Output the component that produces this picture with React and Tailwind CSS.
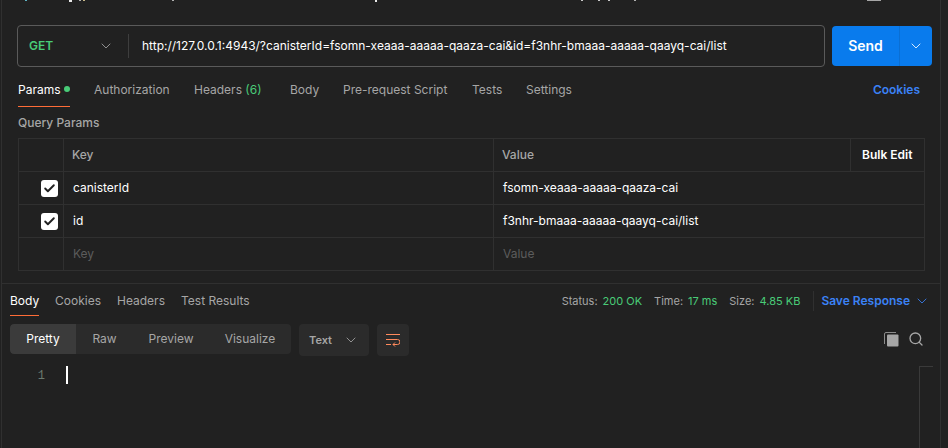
import { ChevronDown, Check, Search } from 'lucide-react';

const PARAM_ROWS = [
  { key: 'canisterId', value: 'fsomn-xeaaa-aaaaa-qaaza-cai' },
  { key: 'id', value: 'f3nhr-bmaaa-aaaaa-qaayq-cai/list' },
];

function ParamRow({ children, checked }) {
  return (
    <div className="grid grid-cols-[45px_430px_1fr] h-[33px] border-b border-[#303030]">
      <div className="flex items-center justify-end pr-[5px] border-r border-[#303030]">
        {checked && (
          <span className="w-[17px] h-[17px] rounded-[3px] bg-white flex items-center justify-center">
            <Check className="w-[13px] h-[13px] text-[#212121]" strokeWidth={3.5} />
          </span>
        )}
      </div>
      {children}
    </div>
  );
}

function WrapIcon() {
  return (
    <svg width="14" height="13" viewBox="0 0 14 13" fill="none" stroke="#ff8a5c" strokeWidth="1">
      <path d="M0 .5h14" />
      <path d="M0 5.500h11.500a2.500 2.500 0 0 1 0 5H7" />
      <path d="M9 8.500l-2 2 2 2" />
      <path d="M0 10.500h5" />
    </svg>
  );
}

export default function App() {
  return (
    <div className="relative w-[948px] h-[448px] bg-[#212121] overflow-hidden font-['Inter',sans-serif] text-[12px] flex">
      {/* bottom edge of the line cut off above the crop */}
      <svg className="absolute left-0 top-0" width="948" height="2">
        <rect x="25" y="0" width="2" height="1" fill="#5fb4c4" />
        <rect x="69" y="0" width="3" height="2" fill="#e8e8e8" />
        <rect x="79" y="0" width="2" height="1" fill="#b0b0b0" />
        <rect x="83" y="0" width="2" height="1" fill="#c8b888" />
        <rect x="172" y="0" width="2" height="1" fill="#b0b0b0" />
        <rect x="375" y="0" width="2" height="2" fill="#e8e8e8" />
        <rect x="581" y="0" width="2" height="1" fill="#c8c8c8" />
        <rect x="598" y="0" width="2" height="1" fill="#c8c8c8" />
        <rect x="608" y="0" width="2" height="1" fill="#c8c8c8" />
        <rect x="634" y="0" width="2" height="1" fill="#b0b0b0" />
        <rect x="867" y="0" width="14" height="1" fill="#a6a6a6" />
      </svg>

      <div className="w-[940px] h-full ml-[1px] border-l border-r border-[#303030] flex flex-col">
        {/* Request */}
        <div className="h-[284px] border-b border-[#303030] shrink-0 pt-[25px] pl-[15px] pr-[7px]">
          <div className="flex gap-[7px]">
            <div className="w-[808px] h-[42px] border border-[#5a5a5a] rounded-[4px] flex items-center">
              <span className="w-[80px] pl-[11px] text-[#49cc78] font-semibold">GET</span>
              <ChevronDown className="w-[16px] h-[16px] text-[#a6a6a6]" strokeWidth={1.25} />
              <div className="w-px h-[24px] bg-[#3e3e3e] ml-[14px]" />
              <span className="ml-[13px] text-white whitespace-nowrap">
                http://127.0.0.1:4943/?canisterId=fsomn-xeaaa-aaaaa-qaaza-cai&amp;id=f3nhr-bmaaa-aaaaa-qaayq-cai/list
              </span>
            </div>
            <div className="w-[100px] h-[40px] mt-px rounded-[4px] bg-[#097bed] flex items-center text-white">
              <span className="w-[68px] text-center text-[14px] font-semibold border-r border-[#0a6fd4] leading-[40px]">Send</span>
              <span className="flex-1 flex justify-center">
                <ChevronDown className="w-[16px] h-[16px]" strokeWidth={1.25} />
              </span>
            </div>
          </div>

          <div className="flex h-[39px] pt-[14px] text-[#a6a6a6] relative">
            <span className="w-[75px] text-white pl-[1px] flex gap-[3px] items-start relative">
              Params
              <span className="w-[6px] h-[6px] rounded-full bg-[#49cc78] mt-[5px]" />
              <span className="absolute left-[1px] top-[25px] w-[52px] h-px bg-[#ff6c37]" />
            </span>
            <span className="w-[102px] pl-[2px]">Authorization</span>
            <span className="w-[96px]">Headers <span className="text-[#49cc78]">(6)</span></span>
            <span className="w-[53px]">Body</span>
            <span className="w-[129px]">Pre-request Script</span>
            <span className="w-[54px]">Tests</span>
            <span>Settings</span>
            <span className="ml-auto mr-[13px] text-[#3b82f6] font-semibold">Cookies</span>
          </div>

          <div className="ml-[1px] mt-[8px] h-[24px] text-[#a6a6a6] font-medium">Query Params</div>

          <div className="ml-[1px] w-[907px] border border-b-0 border-[#303030]">
            <div className="grid grid-cols-[45px_430px_1fr_73px] h-[33px] border-b border-[#303030] items-stretch font-medium text-[#a6a6a6]">
              <div className="border-r border-[#303030]" />
              <div className="border-r border-[#303030] flex items-center pl-[8px]">Key</div>
              <div className="border-r border-[#303030] flex items-center pl-[8px]">Value</div>
              <div className="flex items-center pl-[11px] text-white font-semibold whitespace-nowrap">Bulk Edit</div>
            </div>
            {PARAM_ROWS.map((row) => (
              <ParamRow key={row.key} checked>
                <div className="border-r border-[#303030] flex items-center pl-[9px] text-white">{row.key}</div>
                <div className="flex items-center pl-[9px] text-white">{row.value}</div>
              </ParamRow>
            ))}
            <ParamRow>
              <div className="border-r border-[#303030] flex items-center pl-[9px] pb-[1px] text-[#5c5c5c]">Key</div>
              <div className="flex items-center pl-[9px] pb-[1px] text-[#5c5c5c]">Value</div>
            </ParamRow>
          </div>
        </div>

        {/* Response */}
        <div className="flex-1 pl-[8px] pr-[7px] relative">
          <div className="flex items-center h-[34px] text-[#a6a6a6]">
            <span className="w-[45px] text-white relative">
              Body
              <span className="absolute left-0 top-[23px] w-[29px] h-px bg-[#ff6c37]" />
            </span>
            <span className="w-[62px]">Cookies</span>
            <span className="w-[64px]">Headers</span>
            <span>Test Results</span>
            <div className="ml-auto flex items-center h-[20px] mr-[3px] text-[11px]">
              <span>Status:</span>
              <span className="ml-[5px] text-[#49cc78]">200 OK</span>
              <span className="ml-[12px]">Time:</span>
              <span className="ml-[5px] text-[#49cc78]">17 ms</span>
              <span className="ml-[12px]">Size:</span>
              <span className="ml-[5px] text-[#49cc78]">4.85 KB</span>
              <div className="w-px h-[20px] bg-[#303030] ml-[13px] mr-[7px]" />
              <span className="text-[12px] text-[#3b82f6] font-semibold">Save Response</span>
              <ChevronDown className="ml-[4px] w-[16px] h-[16px] text-[#3b82f6]" strokeWidth={1.25} />
            </div>
          </div>

          <div className="flex items-start mt-[6px]">
            <div className="flex w-[281px] h-[30px] rounded-[4px] bg-[#2b2b2b] text-[#a6a6a6] items-center overflow-hidden">
              <span className="w-[66px] h-full bg-[#3b3b3b] rounded-l-[4px] flex items-center justify-center text-white">Pretty</span>
              <span className="w-[57px] text-center">Raw</span>
              <span className="w-[76px] text-center">Preview</span>
              <span className="w-[82px] text-center">Visualize</span>
            </div>
            <div className="ml-[8px] w-[70px] h-[32px] rounded-[4px] bg-[#2b2b2b] flex items-center pl-[10px] text-[11px] font-semibold text-[#a6a6a6]">
              Text
              <ChevronDown className="ml-[11px] w-[16px] h-[16px]" strokeWidth={1.25} />
            </div>
            <div className="ml-[8px] w-[32px] h-[32px] rounded-[4px] bg-[#2b2b2b] flex items-center justify-center">
              <WrapIcon />
            </div>
            <div className="ml-auto flex items-center gap-[9px] mt-[7px] mr-[9px]">
              <svg width="15" height="15" viewBox="0 0 15 15" fill="none">
                <path d="M12 .5H2A1.500 1.500 0 0 0 .5 2v10" stroke="#8c8c8c" />
                <rect x="3" y="2.500" width="11.500" height="12" rx="1" fill="#a6a6a6" />
              </svg>
              <Search className="w-[16px] h-[16px] text-[#a6a6a6]" strokeWidth={2} />
            </div>
          </div>

          <div className="flex mt-[10px] h-[90px]">
            <span className="w-[35px] text-right pt-[1px] text-[#6b7a6f] font-['Liberation_Mono',monospace]">1</span>
            <span className="ml-[21px] w-[2px] h-[18px] bg-white" />
            <div className="ml-auto w-[14px] border-l border-t border-[#3a3a3a]" />
          </div>
        </div>
      </div>
    </div>
  );
}
